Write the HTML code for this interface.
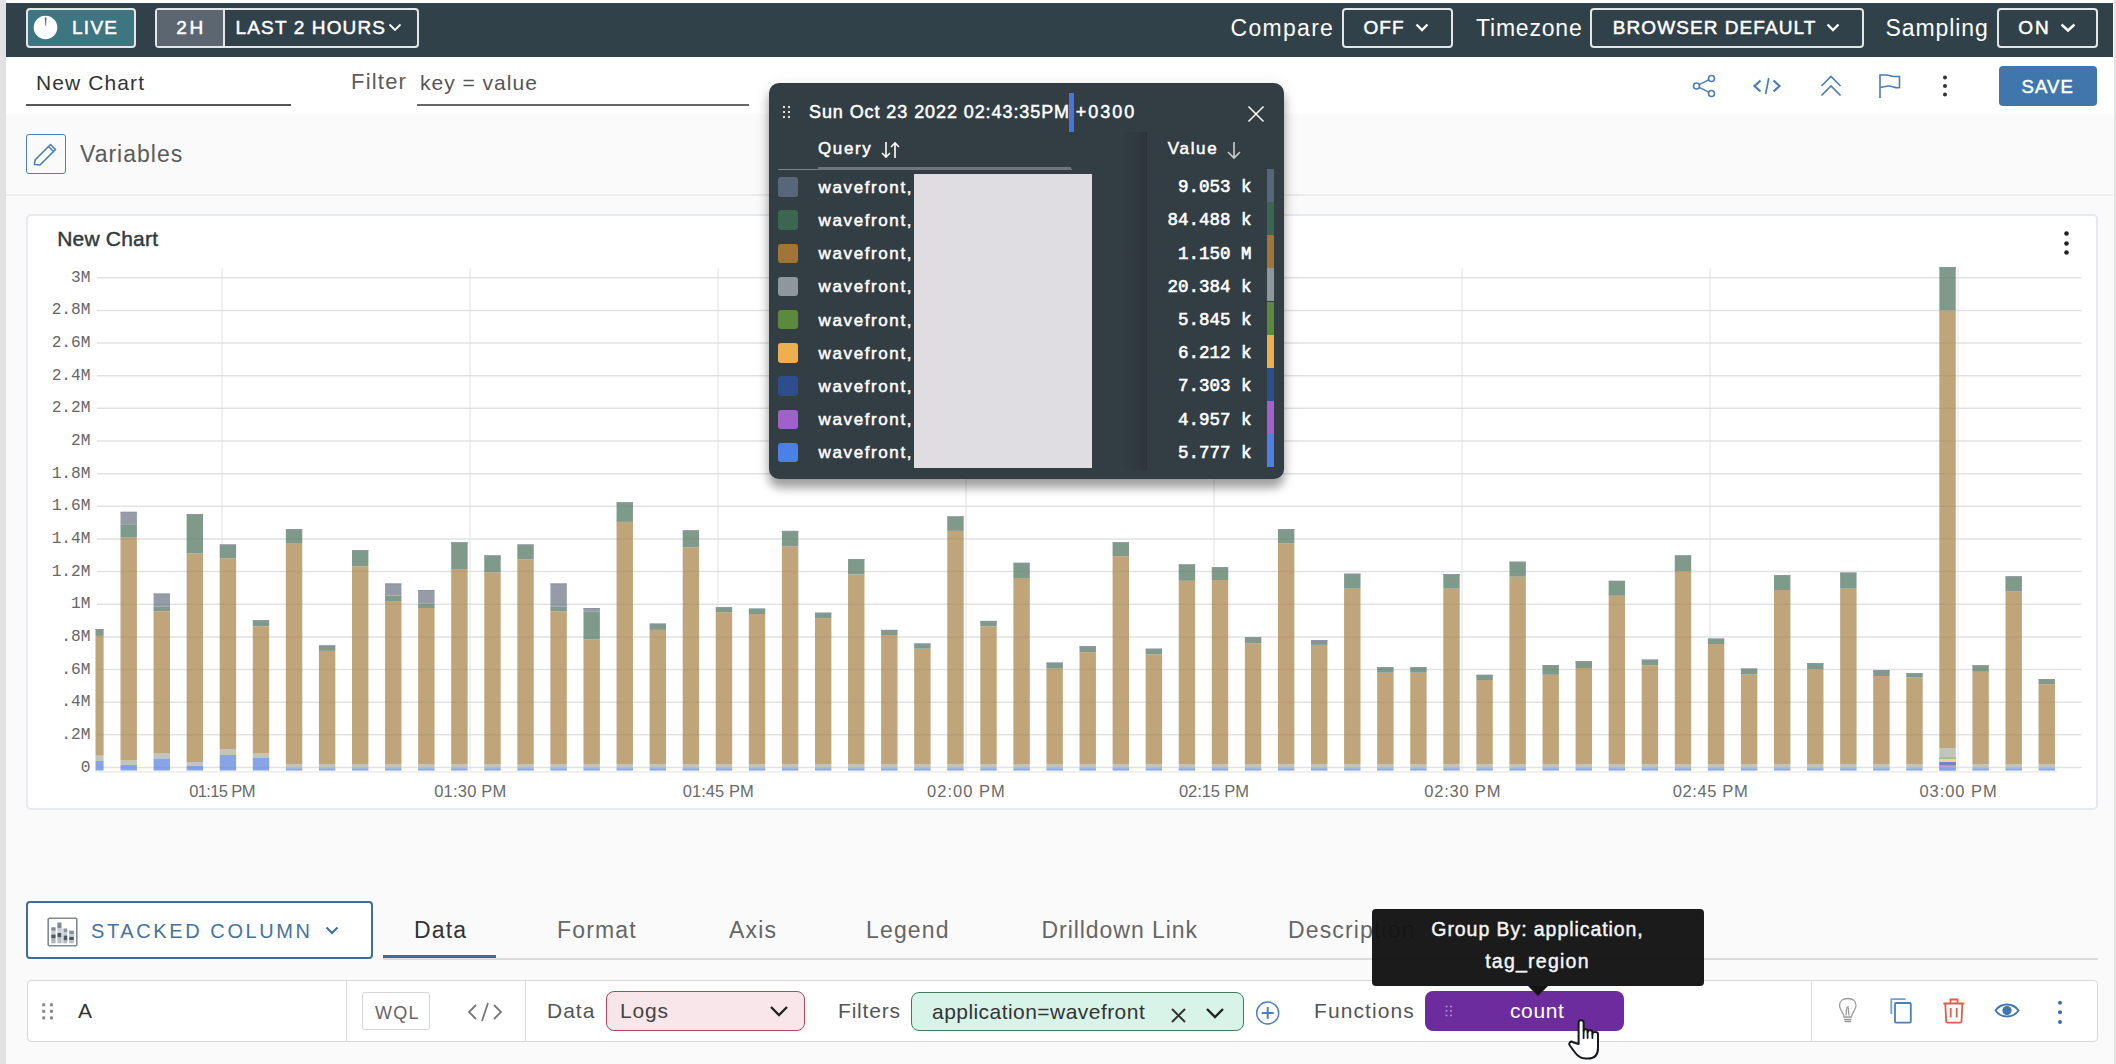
<!DOCTYPE html>
<html><head><meta charset="utf-8">
<style>
*{box-sizing:border-box;margin:0;padding:0}
html,body{width:2116px;height:1064px;overflow:hidden;background:#fafafa;font-family:"Liberation Sans",sans-serif}
.a{position:absolute;white-space:nowrap}
#lstrip{position:absolute;left:0;top:0;width:6px;height:1064px;background:#e2e2e2}
#rstrip{position:absolute;left:2114px;top:0;width:2px;height:1064px;background:#e2e2e2}
#topw{position:absolute;left:6px;top:0;width:2108px;height:3px;background:#fff}
#hdr{position:absolute;left:6px;top:3px;width:2107px;height:54.6px;background:#30414a}
#tb{position:absolute;left:6px;top:57px;width:2108px;height:56.5px;background:#fff}
.hb{position:absolute;border:2px solid #e4e6e8;border-radius:4px;height:40px;top:8px}
.ht{position:absolute;color:#fff;font-size:19px;font-weight:normal;-webkit-text-stroke:0.5px #fff;letter-spacing:0.3px;line-height:22px}
.hl{position:absolute;color:#fff;font-size:23px;line-height:28px;top:14px}
.chev{position:absolute}
.yl{position:absolute;left:29.5px;width:61px;text-align:right;font-family:"Liberation Mono",monospace;font-size:16.2px;line-height:20px;color:#666}
.xl{position:absolute;top:781px;font-size:16.5px;line-height:20px;color:#6a6a6a}
#tip{position:absolute;left:768.5px;top:83px;width:515.5px;height:395.5px;background:#333e44;border-radius:10px;box-shadow:0 9px 10px rgba(0,0,0,0.32),0 3px 16px rgba(0,0,0,0.12)}
.sw{position:absolute;left:778px;width:20px;height:19.5px;border-radius:3px}
.wf{position:absolute;left:817px;font-size:17px;line-height:24px;color:#fff;font-weight:normal;-webkit-text-stroke:0.5px #fff;letter-spacing:0.85px}
.val{position:absolute;left:1128px;width:123.5px;text-align:right;font-family:"Liberation Mono",monospace;font-size:17.5px;line-height:24px;color:#fff;font-weight:normal;-webkit-text-stroke:0.6px #fff;letter-spacing:0px}
.strip{position:absolute;left:1267px;width:7px;height:33.1px}
.tab{position:absolute;top:916px;font-size:23px;line-height:28px;color:#666;letter-spacing:1.15px}
.qi{position:absolute}
</style></head><body>
<div id="lstrip"></div><div id="rstrip"></div><div id="topw"></div>
<div id="hdr"></div>
<!-- LIVE -->
<div class="hb" style="left:26px;width:110px;background:#3d7680"></div>
<svg class="a" style="left:33px;top:15px" width="26" height="26" viewBox="0 0 26 26"><circle cx="12.5" cy="12.5" r="11.8" fill="#fff"/><path d="M11.7 2.4 L13.6 2.4 L12.9 11 L12.4 11 Z" fill="#3d7680"/></svg>
<div id="t_live" class="ht" style="left:72px;top:17px;letter-spacing:0.8px">LIVE</div>
<!-- 2H group -->
<div class="hb" style="left:155px;width:264px;background:#30414a"></div>
<div class="a" style="left:157px;top:10px;width:66px;height:36px;background:#5b6670"></div>
<div class="a" style="left:223px;top:10px;width:2px;height:36px;background:#e4e6e8"></div>
<div id="t_2h" class="ht" style="left:176px;top:17px;letter-spacing:1px">2H</div>
<div id="t_last" class="ht" style="left:236px;top:17px;letter-spacing:0.75px">LAST 2 HOURS</div>
<svg class="a" style="left:388px;top:21px" width="14" height="12" viewBox="0 0 14 12"><path d="M1.5 3.5 L7 9 L12.5 3.5" stroke="#fff" stroke-width="1.8" fill="none"/></svg>
<!-- right header -->
<div class="hl" style="left:1230.5px;letter-spacing:1.3px">Compare</div>
<div class="hb" style="left:1342px;width:111px"></div>
<div id="t_off" class="ht" style="left:1363px;top:17px">OFF</div>
<svg class="a" style="left:1414px;top:21px" width="16" height="12" viewBox="0 0 16 12"><path d="M2.5 3.5 L8 9 L13.5 3.5" stroke="#fff" stroke-width="2.4" fill="none"/></svg>
<div class="hl" style="left:1476px;letter-spacing:0.8px">Timezone</div>
<div class="hb" style="left:1590px;width:274px"></div>
<div id="t_bd" class="ht" style="left:1613px;top:17px;letter-spacing:0.8px">BROWSER DEFAULT</div>
<svg class="a" style="left:1825px;top:21px" width="16" height="12" viewBox="0 0 16 12"><path d="M2.5 3.5 L8 9 L13.5 3.5" stroke="#fff" stroke-width="2.4" fill="none"/></svg>
<div class="hl" style="left:1885.5px;letter-spacing:0.9px">Sampling</div>
<div class="hb" style="left:1997px;width:101px"></div>
<div id="t_on" class="ht" style="left:2018px;top:17px;letter-spacing:1.3px">ON</div>
<svg class="a" style="left:2060px;top:21px" width="16" height="12" viewBox="0 0 16 12"><path d="M1.5 3.5 L8 9.5 L14.5 3.5" stroke="#fff" stroke-width="2.4" fill="none"/></svg>

<!-- toolbar -->
<div id="tb"></div>
<div class="a" style="left:36px;top:70px;font-size:21px;line-height:26px;color:#333;letter-spacing:1.1px">New Chart</div>
<div class="a" style="left:26px;top:103.5px;width:265px;height:2px;background:#555"></div>
<div class="a" style="left:351px;top:69px;font-size:22px;line-height:26px;color:#5c5c5c;letter-spacing:1.2px">Filter</div>
<div class="a" style="left:420px;top:70px;font-size:21px;line-height:26px;color:#555;letter-spacing:1px">key = value</div>
<div class="a" style="left:417px;top:103.5px;width:332px;height:2px;background:#666"></div>
<!-- icons -->
<svg class="a" style="left:1690px;top:72px" width="28" height="28" viewBox="0 0 28 28" fill="none" stroke="#4a7cb6" stroke-width="1.6"><circle cx="21.5" cy="6.5" r="3"/><circle cx="21.5" cy="21.5" r="3"/><circle cx="6.5" cy="14" r="3"/><path d="M9.2 12.6 L18.8 7.9 M9.2 15.4 L18.8 20.1"/></svg>
<svg class="a" style="left:1751px;top:74px" width="32" height="24" viewBox="0 0 32 24" fill="none" stroke="#4a7cb6" stroke-width="2.2"><path d="M9.5 6.5 L3.5 12 L9.5 17.5 M22.5 6.5 L28.5 12 L22.5 17.5"/><path d="M17.8 4 L14.6 20" stroke-width="1.7"/></svg>
<svg class="a" style="left:1817px;top:72px" width="28" height="28" viewBox="0 0 28 28" fill="none" stroke="#4a7cb6" stroke-width="1.6"><path d="M4.5 14 L14 4.5 L23.5 14 M4.5 23.5 L14 14 L23.5 23.5"/></svg>
<svg class="a" style="left:1876px;top:72px" width="28" height="28" viewBox="0 0 28 28" fill="none" stroke="#4a7cb6" stroke-width="1.6"><path d="M4 26 L4 3 L10 3 C14 3 15 5 19 4.5 L23.5 4.5 L23.5 15.5 C19 16.5 17 14 13 14 C9 14 7 15.5 4 15.5"/></svg>
<svg class="a" style="left:1937px;top:72px" width="16" height="28" viewBox="0 0 16 28" fill="#333"><circle cx="8" cy="5.5" r="2"/><circle cx="8" cy="14" r="2"/><circle cx="8" cy="22.5" r="2"/></svg>
<div class="a" style="left:1999px;top:66px;width:98px;height:40px;background:#3f77ad;border-radius:4px"></div>
<div id="t_save" class="ht" style="left:2021.5px;top:75.5px;font-size:18.5px;letter-spacing:1.1px">SAVE</div>

<!-- variables -->
<div class="a" style="left:26px;top:133.5px;width:40px;height:40px;border:1.8px solid #4a7fc0;border-radius:3px;background:#fafafa"></div>
<svg class="a" style="left:30px;top:138px" width="32" height="32" viewBox="0 0 32 32" fill="none" stroke="#4a7fc0" stroke-width="1.6" stroke-linejoin="round"><path d="M4.5 26.5 L5 22 L20.5 6.5 L25.5 11.5 L10 27 Z M18.5 8.5 L23.5 13.5"/></svg>
<div class="a" style="left:80px;top:140px;font-size:23px;line-height:28px;color:#5a5a5a;letter-spacing:1px">Variables</div>
<div class="a" style="left:6px;top:194px;width:2107px;height:1.5px;background:#ececec"></div>

<!-- card -->
<div class="a" style="left:25.8px;top:213.6px;width:2072.2px;height:596.4px;background:#fff;border:2px solid #e7eaf0;border-radius:5px"></div>
<div id="t_card" class="a" style="left:57px;top:226px;font-size:21px;line-height:26px;color:#2f3a40;font-weight:normal;-webkit-text-stroke:0.45px #2f3a40;letter-spacing:-0.4px">New Chart</div>
<svg class="a" style="left:2058px;top:228px" width="16" height="30" viewBox="0 0 16 30" fill="#222"><circle cx="8.5" cy="5.5" r="2.3"/><circle cx="8.5" cy="15.5" r="2.3"/><circle cx="8.5" cy="24.5" r="2.3"/></svg>
<svg class="a" style="left:0;top:0" width="2116" height="1064">
<line x1="97" y1="767.50" x2="2081.5" y2="767.50" stroke="#ededed" stroke-width="1.5"/>
<line x1="97" y1="734.85" x2="2081.5" y2="734.85" stroke="#ededed" stroke-width="1.5"/>
<line x1="97" y1="702.20" x2="2081.5" y2="702.20" stroke="#ededed" stroke-width="1.5"/>
<line x1="97" y1="669.55" x2="2081.5" y2="669.55" stroke="#ededed" stroke-width="1.5"/>
<line x1="97" y1="636.90" x2="2081.5" y2="636.90" stroke="#ededed" stroke-width="1.5"/>
<line x1="97" y1="604.25" x2="2081.5" y2="604.25" stroke="#ededed" stroke-width="1.5"/>
<line x1="97" y1="571.60" x2="2081.5" y2="571.60" stroke="#ededed" stroke-width="1.5"/>
<line x1="97" y1="538.95" x2="2081.5" y2="538.95" stroke="#ededed" stroke-width="1.5"/>
<line x1="97" y1="506.30" x2="2081.5" y2="506.30" stroke="#ededed" stroke-width="1.5"/>
<line x1="97" y1="473.65" x2="2081.5" y2="473.65" stroke="#ededed" stroke-width="1.5"/>
<line x1="97" y1="441.00" x2="2081.5" y2="441.00" stroke="#ededed" stroke-width="1.5"/>
<line x1="97" y1="408.35" x2="2081.5" y2="408.35" stroke="#ededed" stroke-width="1.5"/>
<line x1="97" y1="375.70" x2="2081.5" y2="375.70" stroke="#ededed" stroke-width="1.5"/>
<line x1="97" y1="343.05" x2="2081.5" y2="343.05" stroke="#ededed" stroke-width="1.5"/>
<line x1="97" y1="310.40" x2="2081.5" y2="310.40" stroke="#ededed" stroke-width="1.5"/>
<line x1="97" y1="277.75" x2="2081.5" y2="277.75" stroke="#ededed" stroke-width="1.5"/>
<line x1="222" y1="268" x2="222" y2="772" stroke="#ededed" stroke-width="1.5"/>
<line x1="470" y1="268" x2="470" y2="772" stroke="#ededed" stroke-width="1.5"/>
<line x1="718" y1="268" x2="718" y2="772" stroke="#ededed" stroke-width="1.5"/>
<line x1="966" y1="268" x2="966" y2="772" stroke="#ededed" stroke-width="1.5"/>
<line x1="1214" y1="268" x2="1214" y2="772" stroke="#ededed" stroke-width="1.5"/>
<line x1="1462" y1="268" x2="1462" y2="772" stroke="#ededed" stroke-width="1.5"/>
<line x1="1710" y1="268" x2="1710" y2="772" stroke="#ededed" stroke-width="1.5"/>
<line x1="1958" y1="268" x2="1958" y2="772" stroke="#ededed" stroke-width="1.5"/>
<line x1="95" y1="771.8" x2="2058" y2="771.8" stroke="#ececec" stroke-width="1.5"/>
<rect x="95.50" y="635.90" width="8.1" height="119.90" fill="#c0a57a"/>
<rect x="95.50" y="629.00" width="8.1" height="6.90" fill="#7f9a8b"/>
<rect x="95.50" y="629.00" width="8.1" height="1" fill="#8e95a3"/>
<rect x="95.50" y="755.80" width="8.1" height="5.20" fill="#c3c5bb"/>
<rect x="95.50" y="761.00" width="8.1" height="9.50" fill="#86a4e6"/>
<rect x="120.50" y="537.70" width="16.4" height="222.30" fill="#c0a57a"/>
<rect x="120.50" y="511.80" width="16.4" height="13.10" fill="#959ba7"/>
<rect x="120.50" y="524.90" width="16.4" height="12.80" fill="#7f9a8b"/>
<rect x="120.50" y="511.80" width="16.4" height="1" fill="#8e95a3"/>
<rect x="120.50" y="760.00" width="16.4" height="5.00" fill="#c3c5bb"/>
<rect x="120.50" y="765.00" width="16.4" height="5.50" fill="#86a4e6"/>
<rect x="153.57" y="611.30" width="16.4" height="141.70" fill="#c0a57a"/>
<rect x="153.57" y="593.60" width="16.4" height="13.10" fill="#959ba7"/>
<rect x="153.57" y="606.70" width="16.4" height="4.60" fill="#7f9a8b"/>
<rect x="153.57" y="593.60" width="16.4" height="1" fill="#8e95a3"/>
<rect x="153.57" y="753.00" width="16.4" height="5.50" fill="#c3c5bb"/>
<rect x="153.57" y="758.50" width="16.4" height="12.00" fill="#86a4e6"/>
<rect x="186.64" y="553.50" width="16.4" height="208.50" fill="#c0a57a"/>
<rect x="186.64" y="514.00" width="16.4" height="39.50" fill="#7f9a8b"/>
<rect x="186.64" y="514.00" width="16.4" height="1" fill="#8e95a3"/>
<rect x="186.64" y="762.00" width="16.4" height="4.00" fill="#c3c5bb"/>
<rect x="186.64" y="766.00" width="16.4" height="4.50" fill="#86a4e6"/>
<rect x="219.71" y="558.20" width="16.4" height="190.80" fill="#c0a57a"/>
<rect x="219.71" y="544.50" width="16.4" height="13.70" fill="#7f9a8b"/>
<rect x="219.71" y="544.50" width="16.4" height="1" fill="#8e95a3"/>
<rect x="219.71" y="749.00" width="16.4" height="6.00" fill="#c3c5bb"/>
<rect x="219.71" y="755.00" width="16.4" height="15.50" fill="#86a4e6"/>
<rect x="252.78" y="626.30" width="16.4" height="126.70" fill="#c0a57a"/>
<rect x="252.78" y="620.30" width="16.4" height="6.00" fill="#7f9a8b"/>
<rect x="252.78" y="620.30" width="16.4" height="1" fill="#8e95a3"/>
<rect x="252.78" y="753.00" width="16.4" height="5.00" fill="#c3c5bb"/>
<rect x="252.78" y="758.00" width="16.4" height="12.50" fill="#86a4e6"/>
<rect x="285.85" y="543.70" width="16.4" height="220.30" fill="#c0a57a"/>
<rect x="285.85" y="529.00" width="16.4" height="14.70" fill="#7f9a8b"/>
<rect x="285.85" y="529.00" width="16.4" height="1" fill="#8e95a3"/>
<rect x="285.85" y="764.00" width="16.4" height="4.30" fill="#c3c5bb"/>
<rect x="285.85" y="768.30" width="16.4" height="2.20" fill="#86a4e6"/>
<rect x="318.92" y="650.90" width="16.4" height="113.10" fill="#c0a57a"/>
<rect x="318.92" y="645.40" width="16.4" height="5.50" fill="#7f9a8b"/>
<rect x="318.92" y="645.40" width="16.4" height="1" fill="#8e95a3"/>
<rect x="318.92" y="764.00" width="16.4" height="4.30" fill="#c3c5bb"/>
<rect x="318.92" y="768.30" width="16.4" height="2.20" fill="#86a4e6"/>
<rect x="351.99" y="566.30" width="16.4" height="197.70" fill="#c0a57a"/>
<rect x="351.99" y="550.00" width="16.4" height="16.30" fill="#7f9a8b"/>
<rect x="351.99" y="550.00" width="16.4" height="1" fill="#8e95a3"/>
<rect x="351.99" y="764.00" width="16.4" height="4.30" fill="#c3c5bb"/>
<rect x="351.99" y="768.30" width="16.4" height="2.20" fill="#86a4e6"/>
<rect x="385.06" y="601.00" width="16.4" height="163.00" fill="#c0a57a"/>
<rect x="385.06" y="583.50" width="16.4" height="12.00" fill="#959ba7"/>
<rect x="385.06" y="595.50" width="16.4" height="5.50" fill="#7f9a8b"/>
<rect x="385.06" y="583.50" width="16.4" height="1" fill="#8e95a3"/>
<rect x="385.06" y="764.00" width="16.4" height="4.30" fill="#c3c5bb"/>
<rect x="385.06" y="768.30" width="16.4" height="2.20" fill="#86a4e6"/>
<rect x="418.13" y="608.00" width="16.4" height="156.00" fill="#c0a57a"/>
<rect x="418.13" y="590.00" width="16.4" height="13.70" fill="#959ba7"/>
<rect x="418.13" y="603.70" width="16.4" height="4.30" fill="#7f9a8b"/>
<rect x="418.13" y="590.00" width="16.4" height="1" fill="#8e95a3"/>
<rect x="418.13" y="764.00" width="16.4" height="4.30" fill="#c3c5bb"/>
<rect x="418.13" y="768.30" width="16.4" height="2.20" fill="#86a4e6"/>
<rect x="451.20" y="569.00" width="16.4" height="195.00" fill="#c0a57a"/>
<rect x="451.20" y="542.30" width="16.4" height="26.70" fill="#7f9a8b"/>
<rect x="451.20" y="542.30" width="16.4" height="1" fill="#8e95a3"/>
<rect x="451.20" y="764.00" width="16.4" height="4.30" fill="#c3c5bb"/>
<rect x="451.20" y="768.30" width="16.4" height="2.20" fill="#86a4e6"/>
<rect x="484.27" y="572.30" width="16.4" height="191.70" fill="#c0a57a"/>
<rect x="484.27" y="555.40" width="16.4" height="16.90" fill="#7f9a8b"/>
<rect x="484.27" y="555.40" width="16.4" height="1" fill="#8e95a3"/>
<rect x="484.27" y="764.00" width="16.4" height="4.30" fill="#c3c5bb"/>
<rect x="484.27" y="768.30" width="16.4" height="2.20" fill="#86a4e6"/>
<rect x="517.34" y="559.50" width="16.4" height="204.50" fill="#c0a57a"/>
<rect x="517.34" y="544.50" width="16.4" height="15.00" fill="#7f9a8b"/>
<rect x="517.34" y="544.50" width="16.4" height="1" fill="#8e95a3"/>
<rect x="517.34" y="764.00" width="16.4" height="4.30" fill="#c3c5bb"/>
<rect x="517.34" y="768.30" width="16.4" height="2.20" fill="#86a4e6"/>
<rect x="550.41" y="611.30" width="16.4" height="152.70" fill="#c0a57a"/>
<rect x="550.41" y="583.50" width="16.4" height="22.90" fill="#959ba7"/>
<rect x="550.41" y="606.40" width="16.4" height="4.90" fill="#7f9a8b"/>
<rect x="550.41" y="583.50" width="16.4" height="1" fill="#8e95a3"/>
<rect x="550.41" y="764.00" width="16.4" height="4.30" fill="#c3c5bb"/>
<rect x="550.41" y="768.30" width="16.4" height="2.20" fill="#86a4e6"/>
<rect x="583.48" y="639.40" width="16.4" height="124.60" fill="#c0a57a"/>
<rect x="583.48" y="608.00" width="16.4" height="3.30" fill="#959ba7"/>
<rect x="583.48" y="611.30" width="16.4" height="28.10" fill="#7f9a8b"/>
<rect x="583.48" y="608.00" width="16.4" height="1" fill="#8e95a3"/>
<rect x="583.48" y="764.00" width="16.4" height="4.30" fill="#c3c5bb"/>
<rect x="583.48" y="768.30" width="16.4" height="2.20" fill="#86a4e6"/>
<rect x="616.55" y="521.90" width="16.4" height="242.10" fill="#c0a57a"/>
<rect x="616.55" y="502.30" width="16.4" height="19.60" fill="#7f9a8b"/>
<rect x="616.55" y="502.30" width="16.4" height="1" fill="#8e95a3"/>
<rect x="616.55" y="764.00" width="16.4" height="4.30" fill="#c3c5bb"/>
<rect x="616.55" y="768.30" width="16.4" height="2.20" fill="#86a4e6"/>
<rect x="649.62" y="629.90" width="16.4" height="134.10" fill="#c0a57a"/>
<rect x="649.62" y="623.60" width="16.4" height="6.30" fill="#7f9a8b"/>
<rect x="649.62" y="623.60" width="16.4" height="1" fill="#8e95a3"/>
<rect x="649.62" y="764.00" width="16.4" height="4.30" fill="#c3c5bb"/>
<rect x="649.62" y="768.30" width="16.4" height="2.20" fill="#86a4e6"/>
<rect x="682.69" y="547.30" width="16.4" height="216.70" fill="#c0a57a"/>
<rect x="682.69" y="530.30" width="16.4" height="17.00" fill="#7f9a8b"/>
<rect x="682.69" y="530.30" width="16.4" height="1" fill="#8e95a3"/>
<rect x="682.69" y="764.00" width="16.4" height="4.30" fill="#c3c5bb"/>
<rect x="682.69" y="768.30" width="16.4" height="2.20" fill="#86a4e6"/>
<rect x="715.76" y="612.10" width="16.4" height="151.90" fill="#c0a57a"/>
<rect x="715.76" y="607.20" width="16.4" height="4.90" fill="#7f9a8b"/>
<rect x="715.76" y="607.20" width="16.4" height="1" fill="#8e95a3"/>
<rect x="715.76" y="764.00" width="16.4" height="4.30" fill="#c3c5bb"/>
<rect x="715.76" y="768.30" width="16.4" height="2.20" fill="#86a4e6"/>
<rect x="748.83" y="614.00" width="16.4" height="150.00" fill="#c0a57a"/>
<rect x="748.83" y="608.60" width="16.4" height="5.40" fill="#7f9a8b"/>
<rect x="748.83" y="608.60" width="16.4" height="1" fill="#8e95a3"/>
<rect x="748.83" y="764.00" width="16.4" height="4.30" fill="#c3c5bb"/>
<rect x="748.83" y="768.30" width="16.4" height="2.20" fill="#86a4e6"/>
<rect x="781.90" y="546.40" width="16.4" height="217.60" fill="#c0a57a"/>
<rect x="781.90" y="530.90" width="16.4" height="15.50" fill="#7f9a8b"/>
<rect x="781.90" y="530.90" width="16.4" height="1" fill="#8e95a3"/>
<rect x="781.90" y="764.00" width="16.4" height="4.30" fill="#c3c5bb"/>
<rect x="781.90" y="768.30" width="16.4" height="2.20" fill="#86a4e6"/>
<rect x="814.97" y="618.10" width="16.4" height="145.90" fill="#c0a57a"/>
<rect x="814.97" y="612.70" width="16.4" height="5.40" fill="#7f9a8b"/>
<rect x="814.97" y="612.70" width="16.4" height="1" fill="#8e95a3"/>
<rect x="814.97" y="764.00" width="16.4" height="4.30" fill="#c3c5bb"/>
<rect x="814.97" y="768.30" width="16.4" height="2.20" fill="#86a4e6"/>
<rect x="848.04" y="574.50" width="16.4" height="189.50" fill="#c0a57a"/>
<rect x="848.04" y="559.00" width="16.4" height="15.50" fill="#7f9a8b"/>
<rect x="848.04" y="559.00" width="16.4" height="1" fill="#8e95a3"/>
<rect x="848.04" y="764.00" width="16.4" height="4.30" fill="#c3c5bb"/>
<rect x="848.04" y="768.30" width="16.4" height="2.20" fill="#86a4e6"/>
<rect x="881.11" y="635.00" width="16.4" height="129.00" fill="#c0a57a"/>
<rect x="881.11" y="629.90" width="16.4" height="5.10" fill="#7f9a8b"/>
<rect x="881.11" y="629.90" width="16.4" height="1" fill="#8e95a3"/>
<rect x="881.11" y="764.00" width="16.4" height="4.30" fill="#c3c5bb"/>
<rect x="881.11" y="768.30" width="16.4" height="2.20" fill="#86a4e6"/>
<rect x="914.18" y="648.70" width="16.4" height="115.30" fill="#c0a57a"/>
<rect x="914.18" y="643.50" width="16.4" height="5.20" fill="#7f9a8b"/>
<rect x="914.18" y="643.50" width="16.4" height="1" fill="#8e95a3"/>
<rect x="914.18" y="764.00" width="16.4" height="4.30" fill="#c3c5bb"/>
<rect x="914.18" y="768.30" width="16.4" height="2.20" fill="#86a4e6"/>
<rect x="947.25" y="530.90" width="16.4" height="233.10" fill="#c0a57a"/>
<rect x="947.25" y="516.40" width="16.4" height="14.50" fill="#7f9a8b"/>
<rect x="947.25" y="516.40" width="16.4" height="1" fill="#8e95a3"/>
<rect x="947.25" y="764.00" width="16.4" height="4.30" fill="#c3c5bb"/>
<rect x="947.25" y="768.30" width="16.4" height="2.20" fill="#86a4e6"/>
<rect x="980.32" y="626.30" width="16.4" height="137.70" fill="#c0a57a"/>
<rect x="980.32" y="620.90" width="16.4" height="5.40" fill="#7f9a8b"/>
<rect x="980.32" y="620.90" width="16.4" height="1" fill="#8e95a3"/>
<rect x="980.32" y="764.00" width="16.4" height="4.30" fill="#c3c5bb"/>
<rect x="980.32" y="768.30" width="16.4" height="2.20" fill="#86a4e6"/>
<rect x="1013.39" y="578.00" width="16.4" height="186.00" fill="#c0a57a"/>
<rect x="1013.39" y="562.80" width="16.4" height="15.20" fill="#7f9a8b"/>
<rect x="1013.39" y="562.80" width="16.4" height="1" fill="#8e95a3"/>
<rect x="1013.39" y="764.00" width="16.4" height="4.30" fill="#c3c5bb"/>
<rect x="1013.39" y="768.30" width="16.4" height="2.20" fill="#86a4e6"/>
<rect x="1046.46" y="668.60" width="16.4" height="95.40" fill="#c0a57a"/>
<rect x="1046.46" y="662.60" width="16.4" height="6.00" fill="#7f9a8b"/>
<rect x="1046.46" y="662.60" width="16.4" height="1" fill="#8e95a3"/>
<rect x="1046.46" y="764.00" width="16.4" height="4.30" fill="#c3c5bb"/>
<rect x="1046.46" y="768.30" width="16.4" height="2.20" fill="#86a4e6"/>
<rect x="1079.53" y="652.20" width="16.4" height="111.80" fill="#c0a57a"/>
<rect x="1079.53" y="646.20" width="16.4" height="6.00" fill="#7f9a8b"/>
<rect x="1079.53" y="646.20" width="16.4" height="1" fill="#8e95a3"/>
<rect x="1079.53" y="764.00" width="16.4" height="4.30" fill="#c3c5bb"/>
<rect x="1079.53" y="768.30" width="16.4" height="2.20" fill="#86a4e6"/>
<rect x="1112.60" y="556.20" width="16.4" height="207.80" fill="#c0a57a"/>
<rect x="1112.60" y="542.30" width="16.4" height="13.90" fill="#7f9a8b"/>
<rect x="1112.60" y="542.30" width="16.4" height="1" fill="#8e95a3"/>
<rect x="1112.60" y="764.00" width="16.4" height="4.30" fill="#c3c5bb"/>
<rect x="1112.60" y="768.30" width="16.4" height="2.20" fill="#86a4e6"/>
<rect x="1145.67" y="654.40" width="16.4" height="109.60" fill="#c0a57a"/>
<rect x="1145.67" y="648.70" width="16.4" height="5.70" fill="#7f9a8b"/>
<rect x="1145.67" y="648.70" width="16.4" height="1" fill="#8e95a3"/>
<rect x="1145.67" y="764.00" width="16.4" height="4.30" fill="#c3c5bb"/>
<rect x="1145.67" y="768.30" width="16.4" height="2.20" fill="#86a4e6"/>
<rect x="1178.74" y="580.80" width="16.4" height="183.20" fill="#c0a57a"/>
<rect x="1178.74" y="564.40" width="16.4" height="16.40" fill="#7f9a8b"/>
<rect x="1178.74" y="564.40" width="16.4" height="1" fill="#8e95a3"/>
<rect x="1178.74" y="764.00" width="16.4" height="4.30" fill="#c3c5bb"/>
<rect x="1178.74" y="768.30" width="16.4" height="2.20" fill="#86a4e6"/>
<rect x="1211.81" y="580.00" width="16.4" height="184.00" fill="#c0a57a"/>
<rect x="1211.81" y="567.20" width="16.4" height="12.80" fill="#7f9a8b"/>
<rect x="1211.81" y="567.20" width="16.4" height="1" fill="#8e95a3"/>
<rect x="1211.81" y="764.00" width="16.4" height="4.30" fill="#c3c5bb"/>
<rect x="1211.81" y="768.30" width="16.4" height="2.20" fill="#86a4e6"/>
<rect x="1244.88" y="643.20" width="16.4" height="120.80" fill="#c0a57a"/>
<rect x="1244.88" y="637.20" width="16.4" height="6.00" fill="#7f9a8b"/>
<rect x="1244.88" y="637.20" width="16.4" height="1" fill="#8e95a3"/>
<rect x="1244.88" y="764.00" width="16.4" height="4.30" fill="#c3c5bb"/>
<rect x="1244.88" y="768.30" width="16.4" height="2.20" fill="#86a4e6"/>
<rect x="1277.95" y="543.20" width="16.4" height="220.80" fill="#c0a57a"/>
<rect x="1277.95" y="529.00" width="16.4" height="14.20" fill="#7f9a8b"/>
<rect x="1277.95" y="529.00" width="16.4" height="1" fill="#8e95a3"/>
<rect x="1277.95" y="764.00" width="16.4" height="4.30" fill="#c3c5bb"/>
<rect x="1277.95" y="768.30" width="16.4" height="2.20" fill="#86a4e6"/>
<rect x="1311.02" y="644.90" width="16.4" height="119.10" fill="#c0a57a"/>
<rect x="1311.02" y="640.00" width="16.4" height="4.90" fill="#7f9a8b"/>
<rect x="1311.02" y="640.00" width="16.4" height="1" fill="#8e95a3"/>
<rect x="1311.02" y="764.00" width="16.4" height="4.30" fill="#c3c5bb"/>
<rect x="1311.02" y="768.30" width="16.4" height="2.20" fill="#86a4e6"/>
<rect x="1344.09" y="588.70" width="16.4" height="175.30" fill="#c0a57a"/>
<rect x="1344.09" y="573.70" width="16.4" height="15.00" fill="#7f9a8b"/>
<rect x="1344.09" y="573.70" width="16.4" height="1" fill="#8e95a3"/>
<rect x="1344.09" y="764.00" width="16.4" height="4.30" fill="#c3c5bb"/>
<rect x="1344.09" y="768.30" width="16.4" height="2.20" fill="#86a4e6"/>
<rect x="1377.16" y="672.70" width="16.4" height="91.30" fill="#c0a57a"/>
<rect x="1377.16" y="667.20" width="16.4" height="5.50" fill="#7f9a8b"/>
<rect x="1377.16" y="667.20" width="16.4" height="1" fill="#8e95a3"/>
<rect x="1377.16" y="764.00" width="16.4" height="4.30" fill="#c3c5bb"/>
<rect x="1377.16" y="768.30" width="16.4" height="2.20" fill="#86a4e6"/>
<rect x="1410.23" y="672.70" width="16.4" height="91.30" fill="#c0a57a"/>
<rect x="1410.23" y="667.20" width="16.4" height="5.50" fill="#7f9a8b"/>
<rect x="1410.23" y="667.20" width="16.4" height="1" fill="#8e95a3"/>
<rect x="1410.23" y="764.00" width="16.4" height="4.30" fill="#c3c5bb"/>
<rect x="1410.23" y="768.30" width="16.4" height="2.20" fill="#86a4e6"/>
<rect x="1443.30" y="588.70" width="16.4" height="175.30" fill="#c0a57a"/>
<rect x="1443.30" y="574.00" width="16.4" height="14.70" fill="#7f9a8b"/>
<rect x="1443.30" y="574.00" width="16.4" height="1" fill="#8e95a3"/>
<rect x="1443.30" y="764.00" width="16.4" height="4.30" fill="#c3c5bb"/>
<rect x="1443.30" y="768.30" width="16.4" height="2.20" fill="#86a4e6"/>
<rect x="1476.37" y="680.00" width="16.4" height="84.00" fill="#c0a57a"/>
<rect x="1476.37" y="674.80" width="16.4" height="5.20" fill="#7f9a8b"/>
<rect x="1476.37" y="674.80" width="16.4" height="1" fill="#8e95a3"/>
<rect x="1476.37" y="764.00" width="16.4" height="4.30" fill="#c3c5bb"/>
<rect x="1476.37" y="768.30" width="16.4" height="2.20" fill="#86a4e6"/>
<rect x="1509.44" y="576.70" width="16.4" height="187.30" fill="#c0a57a"/>
<rect x="1509.44" y="561.70" width="16.4" height="15.00" fill="#7f9a8b"/>
<rect x="1509.44" y="561.70" width="16.4" height="1" fill="#8e95a3"/>
<rect x="1509.44" y="764.00" width="16.4" height="4.30" fill="#c3c5bb"/>
<rect x="1509.44" y="768.30" width="16.4" height="2.20" fill="#86a4e6"/>
<rect x="1542.51" y="674.80" width="16.4" height="89.20" fill="#c0a57a"/>
<rect x="1542.51" y="665.00" width="16.4" height="9.80" fill="#7f9a8b"/>
<rect x="1542.51" y="665.00" width="16.4" height="1" fill="#8e95a3"/>
<rect x="1542.51" y="764.00" width="16.4" height="4.30" fill="#c3c5bb"/>
<rect x="1542.51" y="768.30" width="16.4" height="2.20" fill="#86a4e6"/>
<rect x="1575.58" y="668.00" width="16.4" height="96.00" fill="#c0a57a"/>
<rect x="1575.58" y="661.20" width="16.4" height="6.80" fill="#7f9a8b"/>
<rect x="1575.58" y="661.20" width="16.4" height="1" fill="#8e95a3"/>
<rect x="1575.58" y="764.00" width="16.4" height="4.30" fill="#c3c5bb"/>
<rect x="1575.58" y="768.30" width="16.4" height="2.20" fill="#86a4e6"/>
<rect x="1608.65" y="595.80" width="16.4" height="168.20" fill="#c0a57a"/>
<rect x="1608.65" y="580.80" width="16.4" height="15.00" fill="#7f9a8b"/>
<rect x="1608.65" y="580.80" width="16.4" height="1" fill="#8e95a3"/>
<rect x="1608.65" y="764.00" width="16.4" height="4.30" fill="#c3c5bb"/>
<rect x="1608.65" y="768.30" width="16.4" height="2.20" fill="#86a4e6"/>
<rect x="1641.72" y="665.30" width="16.4" height="98.70" fill="#c0a57a"/>
<rect x="1641.72" y="659.60" width="16.4" height="5.70" fill="#7f9a8b"/>
<rect x="1641.72" y="659.60" width="16.4" height="1" fill="#8e95a3"/>
<rect x="1641.72" y="764.00" width="16.4" height="4.30" fill="#c3c5bb"/>
<rect x="1641.72" y="768.30" width="16.4" height="2.20" fill="#86a4e6"/>
<rect x="1674.79" y="571.00" width="16.4" height="193.00" fill="#c0a57a"/>
<rect x="1674.79" y="555.40" width="16.4" height="15.60" fill="#7f9a8b"/>
<rect x="1674.79" y="555.40" width="16.4" height="1" fill="#8e95a3"/>
<rect x="1674.79" y="764.00" width="16.4" height="4.30" fill="#c3c5bb"/>
<rect x="1674.79" y="768.30" width="16.4" height="2.20" fill="#86a4e6"/>
<rect x="1707.86" y="644.00" width="16.4" height="120.00" fill="#c0a57a"/>
<rect x="1707.86" y="638.60" width="16.4" height="5.40" fill="#7f9a8b"/>
<rect x="1707.86" y="638.60" width="16.4" height="1" fill="#8e95a3"/>
<rect x="1707.86" y="764.00" width="16.4" height="4.30" fill="#c3c5bb"/>
<rect x="1707.86" y="768.30" width="16.4" height="2.20" fill="#86a4e6"/>
<rect x="1740.93" y="674.60" width="16.4" height="89.40" fill="#c0a57a"/>
<rect x="1740.93" y="668.60" width="16.4" height="6.00" fill="#7f9a8b"/>
<rect x="1740.93" y="668.60" width="16.4" height="1" fill="#8e95a3"/>
<rect x="1740.93" y="764.00" width="16.4" height="4.30" fill="#c3c5bb"/>
<rect x="1740.93" y="768.30" width="16.4" height="2.20" fill="#86a4e6"/>
<rect x="1774.00" y="590.00" width="16.4" height="174.00" fill="#c0a57a"/>
<rect x="1774.00" y="575.00" width="16.4" height="15.00" fill="#7f9a8b"/>
<rect x="1774.00" y="575.00" width="16.4" height="1" fill="#8e95a3"/>
<rect x="1774.00" y="764.00" width="16.4" height="4.30" fill="#c3c5bb"/>
<rect x="1774.00" y="768.30" width="16.4" height="2.20" fill="#86a4e6"/>
<rect x="1807.07" y="669.10" width="16.4" height="94.90" fill="#c0a57a"/>
<rect x="1807.07" y="663.10" width="16.4" height="6.00" fill="#7f9a8b"/>
<rect x="1807.07" y="663.10" width="16.4" height="1" fill="#8e95a3"/>
<rect x="1807.07" y="764.00" width="16.4" height="4.30" fill="#c3c5bb"/>
<rect x="1807.07" y="768.30" width="16.4" height="2.20" fill="#86a4e6"/>
<rect x="1840.14" y="588.70" width="16.4" height="175.30" fill="#c0a57a"/>
<rect x="1840.14" y="572.60" width="16.4" height="16.10" fill="#7f9a8b"/>
<rect x="1840.14" y="572.60" width="16.4" height="1" fill="#8e95a3"/>
<rect x="1840.14" y="764.00" width="16.4" height="4.30" fill="#c3c5bb"/>
<rect x="1840.14" y="768.30" width="16.4" height="2.20" fill="#86a4e6"/>
<rect x="1873.21" y="676.00" width="16.4" height="88.00" fill="#c0a57a"/>
<rect x="1873.21" y="670.00" width="16.4" height="6.00" fill="#7f9a8b"/>
<rect x="1873.21" y="670.00" width="16.4" height="1" fill="#8e95a3"/>
<rect x="1873.21" y="764.00" width="16.4" height="4.30" fill="#c3c5bb"/>
<rect x="1873.21" y="768.30" width="16.4" height="2.20" fill="#86a4e6"/>
<rect x="1906.28" y="677.60" width="16.4" height="86.40" fill="#c0a57a"/>
<rect x="1906.28" y="673.20" width="16.4" height="4.40" fill="#7f9a8b"/>
<rect x="1906.28" y="673.20" width="16.4" height="1" fill="#8e95a3"/>
<rect x="1906.28" y="764.00" width="16.4" height="4.30" fill="#c3c5bb"/>
<rect x="1906.28" y="768.30" width="16.4" height="2.20" fill="#86a4e6"/>
<rect x="1939.35" y="310.50" width="16.4" height="437.50" fill="#c0a57a"/>
<rect x="1939.35" y="267.10" width="16.4" height="43.40" fill="#7f9a8b"/>
<rect x="1939.35" y="267.10" width="16.4" height="1" fill="#8e95a3"/>
<rect x="1939.35" y="748.00" width="16.4" height="9.40" fill="#c3c5bb"/>
<rect x="1939.35" y="757.40" width="16.4" height="13.10" fill="#86a4e6"/>
<rect x="1972.42" y="671.80" width="16.4" height="92.20" fill="#c0a57a"/>
<rect x="1972.42" y="665.30" width="16.4" height="6.50" fill="#7f9a8b"/>
<rect x="1972.42" y="665.30" width="16.4" height="1" fill="#8e95a3"/>
<rect x="1972.42" y="764.00" width="16.4" height="4.30" fill="#c3c5bb"/>
<rect x="1972.42" y="768.30" width="16.4" height="2.20" fill="#86a4e6"/>
<rect x="2005.49" y="591.60" width="16.4" height="172.40" fill="#c0a57a"/>
<rect x="2005.49" y="576.30" width="16.4" height="15.30" fill="#7f9a8b"/>
<rect x="2005.49" y="576.30" width="16.4" height="1" fill="#8e95a3"/>
<rect x="2005.49" y="764.00" width="16.4" height="4.30" fill="#c3c5bb"/>
<rect x="2005.49" y="768.30" width="16.4" height="2.20" fill="#86a4e6"/>
<rect x="2038.56" y="684.20" width="16.4" height="79.80" fill="#c0a57a"/>
<rect x="2038.56" y="679.00" width="16.4" height="5.20" fill="#7f9a8b"/>
<rect x="2038.56" y="679.00" width="16.4" height="1" fill="#8e95a3"/>
<rect x="2038.56" y="764.00" width="16.4" height="4.30" fill="#c3c5bb"/>
<rect x="2038.56" y="768.30" width="16.4" height="2.20" fill="#86a4e6"/>
<rect x="1939.35" y="757.4" width="16.4" height="1.6" fill="#9fbf8a"/>
<rect x="1939.35" y="759" width="16.4" height="3" fill="#f2d49a"/>
<rect x="1939.35" y="762" width="16.4" height="3.5" fill="#6d86c0"/>
<rect x="1939.35" y="765.5" width="16.4" height="2.5" fill="#b9a0df"/>
<rect x="1939.35" y="768" width="16.4" height="2.5" fill="#86a4e6"/>
<line x1="97" y1="767.50" x2="2081.5" y2="767.50" stroke="rgba(0,0,0,0.045)" stroke-width="1.5"/>
<line x1="97" y1="734.85" x2="2081.5" y2="734.85" stroke="rgba(0,0,0,0.045)" stroke-width="1.5"/>
<line x1="97" y1="702.20" x2="2081.5" y2="702.20" stroke="rgba(0,0,0,0.045)" stroke-width="1.5"/>
<line x1="97" y1="669.55" x2="2081.5" y2="669.55" stroke="rgba(0,0,0,0.045)" stroke-width="1.5"/>
<line x1="97" y1="636.90" x2="2081.5" y2="636.90" stroke="rgba(0,0,0,0.045)" stroke-width="1.5"/>
<line x1="97" y1="604.25" x2="2081.5" y2="604.25" stroke="rgba(0,0,0,0.045)" stroke-width="1.5"/>
<line x1="97" y1="571.60" x2="2081.5" y2="571.60" stroke="rgba(0,0,0,0.045)" stroke-width="1.5"/>
<line x1="97" y1="538.95" x2="2081.5" y2="538.95" stroke="rgba(0,0,0,0.045)" stroke-width="1.5"/>
<line x1="97" y1="506.30" x2="2081.5" y2="506.30" stroke="rgba(0,0,0,0.045)" stroke-width="1.5"/>
<line x1="97" y1="473.65" x2="2081.5" y2="473.65" stroke="rgba(0,0,0,0.045)" stroke-width="1.5"/>
<line x1="97" y1="441.00" x2="2081.5" y2="441.00" stroke="rgba(0,0,0,0.045)" stroke-width="1.5"/>
<line x1="97" y1="408.35" x2="2081.5" y2="408.35" stroke="rgba(0,0,0,0.045)" stroke-width="1.5"/>
<line x1="97" y1="375.70" x2="2081.5" y2="375.70" stroke="rgba(0,0,0,0.045)" stroke-width="1.5"/>
<line x1="97" y1="343.05" x2="2081.5" y2="343.05" stroke="rgba(0,0,0,0.045)" stroke-width="1.5"/>
<line x1="97" y1="310.40" x2="2081.5" y2="310.40" stroke="rgba(0,0,0,0.045)" stroke-width="1.5"/>
<line x1="97" y1="277.75" x2="2081.5" y2="277.75" stroke="rgba(0,0,0,0.045)" stroke-width="1.5"/>
</svg>
<div class="yl" style="top:757.5px">0</div>
<div class="yl" style="top:724.9px">.2M</div>
<div class="yl" style="top:692.2px">.4M</div>
<div class="yl" style="top:659.5px">.6M</div>
<div class="yl" style="top:626.9px">.8M</div>
<div class="yl" style="top:594.2px">1M</div>
<div class="yl" style="top:561.6px">1.2M</div>
<div class="yl" style="top:529.0px">1.4M</div>
<div class="yl" style="top:496.3px">1.6M</div>
<div class="yl" style="top:463.7px">1.8M</div>
<div class="yl" style="top:431.0px">2M</div>
<div class="yl" style="top:398.4px">2.2M</div>
<div class="yl" style="top:365.7px">2.4M</div>
<div class="yl" style="top:333.1px">2.6M</div>
<div class="yl" style="top:300.4px">2.8M</div>
<div class="yl" style="top:267.8px">3M</div>
<div class="xl" style="left:189.3px;letter-spacing:-0.64px">01:15 PM</div>
<div class="xl" style="left:434.2px;letter-spacing:0.21px">01:30 PM</div>
<div class="xl" style="left:682.8px;letter-spacing:0.04px">01:45 PM</div>
<div class="xl" style="left:927.0px;letter-spacing:1.03px">02:00 PM</div>
<div class="xl" style="left:1179.0px;letter-spacing:-0.09px">02:15 PM</div>
<div class="xl" style="left:1424.2px;letter-spacing:0.80px">02:30 PM</div>
<div class="xl" style="left:1672.8px;letter-spacing:0.61px">02:45 PM</div>
<div class="xl" style="left:1919.5px;letter-spacing:0.93px">03:00 PM</div>

<!-- tab section -->
<div class="a" style="left:26px;top:900.5px;width:346.5px;height:58.5px;border:2px solid #3f6d9c;border-radius:4px;background:#fff"></div>
<svg class="a" style="left:47px;top:916.5px" width="31" height="30" viewBox="0 0 31 30"><rect x="1.2" y="1.2" width="28.6" height="27.6" rx="1" stroke="#7f8c96" stroke-width="1.6" fill="#fff"/><g><rect x="4.3" y="10.3" width="4.3" height="3.5" fill="#7d8a94"/><rect x="4.3" y="13.8" width="4.3" height="3.7" fill="#c3ccd3"/><rect x="4.3" y="17.5" width="4.3" height="4" fill="#4c5864"/><rect x="4.3" y="21.5" width="4.3" height="4.8" fill="#a9b3bb"/><rect x="10.4" y="5.5" width="4.1" height="6" fill="#7f8b95"/><rect x="10.4" y="11.5" width="4.1" height="4.5" fill="#c6cfd6"/><rect x="10.4" y="16" width="4.1" height="4.5" fill="#4c5864"/><rect x="10.4" y="20.5" width="4.1" height="5.8" fill="#b5bec5"/><rect x="14.5" y="11.5" width="2.2" height="14.8" fill="#d2d9de"/><rect x="16.7" y="11.5" width="3.6" height="3.5" fill="#8a969f"/><rect x="16.7" y="15" width="3.6" height="3.5" fill="#c3ccd3"/><rect x="16.7" y="18.5" width="3.6" height="5" fill="#4c5864"/><rect x="16.7" y="23.5" width="3.6" height="2.8" fill="#b0bac1"/><rect x="22.2" y="13.6" width="4.6" height="3.5" fill="#85919a"/><rect x="22.2" y="17.1" width="4.6" height="2.7" fill="#c3ccd3"/><rect x="22.2" y="19.8" width="4.6" height="3.3" fill="#4c5864"/><rect x="22.2" y="23.1" width="4.6" height="3.2" fill="#b5bec5"/></g></svg>
<div class="a" style="left:91px;top:918.5px;font-size:20px;line-height:24px;color:#4672a0;letter-spacing:2.6px">STACKED COLUMN</div>
<svg class="a" style="left:324px;top:924px" width="16" height="12" viewBox="0 0 16 12"><path d="M2.5 3.5 L8 9 L13.5 3.5" stroke="#3f6d9c" stroke-width="2" fill="none"/></svg>
<div class="a" style="left:383px;top:958px;width:1715px;height:1.5px;background:#dcdcdc"></div>
<div class="tab" style="left:414px;color:#333">Data</div>
<div class="a" style="left:383px;top:954.5px;width:113px;height:3.5px;background:#3f6d9c"></div>
<div class="tab" style="left:557px">Format</div>
<div class="tab" style="left:729px">Axis</div>
<div class="tab" style="left:866px">Legend</div>
<div class="tab" style="left:1041.5px;letter-spacing:0.95px">Drilldown Link</div>
<div class="tab" style="left:1288px">Description</div>

<!-- query row -->
<div class="a" style="left:26.5px;top:980px;width:2071px;height:62px;border:1.5px solid #d8d8d8;border-radius:4px;background:#fff"></div>
<svg class="a" style="left:42px;top:1003px" width="12" height="17" viewBox="0 0 12 17" fill="#8a8a8a"><rect x="0.2" y="0.3" width="3" height="3"/><rect x="8" y="0.3" width="3" height="3"/><rect x="0.2" y="6.8" width="3" height="3"/><rect x="8" y="6.8" width="3" height="3"/><rect x="0.2" y="13.4" width="3" height="3"/><rect x="8" y="13.4" width="3" height="3"/></svg>
<div class="a" style="left:78px;top:998px;font-size:21px;line-height:26px;color:#333">A</div>
<div class="a" style="left:345.5px;top:981px;width:1.5px;height:61px;background:#dcdcdc"></div>
<div class="a" style="left:362px;top:992px;width:68px;height:38px;border:1.5px solid #d6d6d6;border-radius:3px"></div>
<div class="a" style="left:375px;top:1002px;font-size:18px;line-height:22px;color:#666;letter-spacing:1.2px">WQL</div>
<svg class="a" style="left:466px;top:1000px" width="38" height="24" viewBox="0 0 38 24" fill="none" stroke="#777" stroke-width="1.8"><path d="M10 5 L3 12 L10 19 M28 5 L35 12 L28 19 M22 3 L16 21"/></svg>
<div class="a" style="left:524.5px;top:981px;width:1.5px;height:61px;background:#dcdcdc"></div>
<div class="a" style="left:547px;top:998px;font-size:21px;line-height:26px;color:#555;letter-spacing:1px">Data</div>
<div class="a" style="left:606px;top:991px;width:199px;height:39.5px;border:1.7px solid #b9475b;border-radius:8px;background:#f9e6ea"></div>
<div class="a" style="left:620px;top:998px;font-size:21px;line-height:26px;color:#444;letter-spacing:0.8px">Logs</div>
<svg class="a" style="left:768px;top:1002px" width="22" height="18" viewBox="0 0 22 18"><path d="M3 5 L11 13 L19 5" stroke="#222" stroke-width="2.4" fill="none"/></svg>
<div class="a" style="left:838px;top:998px;font-size:21px;line-height:26px;color:#555;letter-spacing:0.8px">Filters</div>
<div class="a" style="left:911px;top:991.5px;width:333px;height:39px;border:1.6px solid #3f7d5c;border-radius:8px;background:#d8f4e9"></div>
<div class="a" style="left:932px;top:999px;font-size:21px;line-height:26px;color:#333;letter-spacing:0.45px">application=wavefront</div>
<svg class="a" style="left:1167.5px;top:1003.5px" width="22" height="22" viewBox="0 0 22 22"><path d="M4 5 L17 18 M17 5 L4 18" stroke="#333" stroke-width="2" fill="none"/></svg>
<svg class="a" style="left:1203.5px;top:1003.5px" width="22" height="18" viewBox="0 0 22 18"><path d="M3 5 L11 13 L19 5" stroke="#222" stroke-width="2.4" fill="none"/></svg>
<svg class="a" style="left:1255px;top:1000px" width="26" height="26" viewBox="0 0 26 26" fill="none" stroke="#4a80c0" stroke-width="1.5"><circle cx="12.7" cy="13" r="11"/><path d="M12.7 7 L12.7 19 M6.7 13 L18.7 13" stroke-width="2"/></svg>
<div class="a" style="left:1314px;top:998px;font-size:21px;line-height:26px;color:#555;letter-spacing:1.1px">Functions</div>
<div class="a" style="left:1425px;top:991.4px;width:199px;height:39.5px;border-radius:8px;background:#6d2c9e"></div>
<svg class="a" style="left:1444px;top:1004px" width="10" height="14" viewBox="0 0 10 14" fill="#a98acc"><circle cx="2.5" cy="2.5" r="1.1"/><circle cx="7" cy="2.5" r="1.1"/><circle cx="2.5" cy="7" r="1.1"/><circle cx="7" cy="7" r="1.1"/><circle cx="2.5" cy="11.5" r="1.1"/><circle cx="7" cy="11.5" r="1.1"/></svg>
<div class="a" style="left:1510px;top:998px;font-size:21px;line-height:26px;color:#fff;letter-spacing:0.6px">count</div>
<div class="a" style="left:1810.5px;top:981px;width:1.5px;height:61px;background:#dcdcdc"></div>
<svg class="a" style="left:1834px;top:994px" width="28" height="32" viewBox="0 0 28 32" fill="none" stroke="#9a9a9a" stroke-width="1.3"><path d="M10 23 C10 18.5 5.5 16.5 5.5 11.5 C5.5 7 9 4.5 13.8 4.5 C18.5 4.5 22 7 22 11.5 C22 16.5 17.5 18.5 17.5 23 Z"/><path d="M10 25.5 L17.5 25.5 M10.5 27.5 L17 27.5 M12 21.5 L12.5 15 M15 21.5 L14 13 L12 14.5"/></svg>
<svg class="a" style="left:1886px;top:994px" width="30" height="32" viewBox="0 0 30 32" fill="none" stroke="#4a7fb8" stroke-width="1.8"><path d="M5.3 20 L5.3 5.1 L19.5 5.1" stroke="#7aa0cc"/><rect x="9" y="9" width="15.8" height="19.6" rx="1" fill="#fff"/></svg>
<svg class="a" style="left:1940px;top:994px" width="28" height="32" viewBox="0 0 28 32" fill="none" stroke="#d9614c" stroke-width="1.8"><path d="M3.4 9.5 L24.3 9.5 M10.5 9.5 L10.5 5.5 L17.5 5.5 L17.5 9.5 M5.3 9.5 L6.2 27.5 Q6.3 28.6 7.4 28.6 L20.3 28.6 Q21.4 28.6 21.5 27.5 L22.4 9.5 M10.7 14 L10.7 23.5 M16.7 14 L16.7 23.5" stroke-linecap="butt"/></svg>
<svg class="a" style="left:1992px;top:998px" width="30" height="26" viewBox="0 0 30 26" fill="none" stroke="#3f75b0" stroke-width="1.8"><path d="M3.5 12.5 C9 4.5 21 4.5 26.5 12.5 C21 20.5 9 20.5 3.5 12.5 Z"/><circle cx="15" cy="12.5" r="4.6" fill="#3f75b0" stroke="none"/></svg>
<svg class="a" style="left:2052px;top:996px" width="16" height="30" viewBox="0 0 16 30" fill="#3f6d9c"><circle cx="8" cy="6.8" r="2"/><circle cx="8" cy="16.2" r="2"/><circle cx="8" cy="26" r="2"/></svg>

<!-- group by tooltip -->
<div class="a" style="left:1372px;top:908.5px;width:331.5px;height:77.5px;background:rgba(20,20,20,0.97);border-radius:4px"></div>
<svg class="a" style="left:1527.5px;top:986px" width="20" height="10" viewBox="0 0 20 10"><path d="M0 0 L20 0 L10 10 Z" fill="#141414"/></svg>
<div class="a" style="left:1372px;top:914px;width:331px;text-align:center;font-size:19.5px;line-height:31.8px;color:#f4f4f4;font-weight:normal;-webkit-text-stroke:0.45px #f4f4f4;white-space:normal"><span id="t_gb1" style="letter-spacing:0.2px">Group By: application,</span><br><span id="t_gb2" style="letter-spacing:0.2px">tag_region</span></div>
<!-- cursor -->
<svg class="a" style="left:1566px;top:1018px" width="38" height="44" viewBox="0 0 38 44"><path d="M12.6 26 L12.6 4.6 C12.6 1.6 17.6 1.6 17.6 4.6 L17.6 13 C17.6 10.6 21.6 10.6 21.6 13 L21.6 14 C21.6 11.6 26.4 11.6 26.4 14 L26.4 16 C26.4 13.2 32 13.2 32 16 L32 30 C32 37 28.5 40.6 22 40.6 L19.5 40.6 C14.5 40.6 12 38.5 9 34.5 L3.8 27.5 C2.2 25.2 4.5 22.6 7 24.2 Z" fill="#fff" stroke="#15181c" stroke-width="2" stroke-linejoin="round"/><path d="M17.6 13 L17.6 20 M21.6 14 L21.6 20 M26.4 16 L26.4 20" stroke="#15181c" stroke-width="1.8" stroke-linecap="round"/></svg>
<!-- floating tooltip -->
<div id="tip"></div>
<svg class="a" style="left:782px;top:105px" width="10" height="15" viewBox="0 0 10 15" fill="#ddd"><rect x="1" y="1" width="2" height="2"/><rect x="6" y="1" width="2" height="2"/><rect x="1" y="6" width="2" height="2"/><rect x="6" y="6" width="2" height="2"/><rect x="1" y="11" width="2" height="2"/><rect x="6" y="11" width="2" height="2"/></svg>
<div id="t_ttl" class="a" style="left:809px;top:100px;font-size:18px;line-height:24px;color:#fff;font-weight:normal;-webkit-text-stroke:0.5px #fff;letter-spacing:0.7px">Sun Oct 23 2022 02:43:35PM</div><div id="t_tz" class="a" style="left:1075px;top:100px;font-size:18px;line-height:24px;color:#fff;font-weight:normal;-webkit-text-stroke:0.5px #fff;letter-spacing:1.9px">+0300</div>
<div id="cbar" class="a" style="left:1068.6px;top:92.8px;width:5px;height:39.4px;background:#4a74dc"></div>
<svg class="a" style="left:1245px;top:103px" width="22" height="22" viewBox="0 0 22 22"><path d="M3.5 3.5 L18.5 18.5 M18.5 3.5 L3.5 18.5" stroke="#fff" stroke-width="1.5"/></svg>
<div id="t_query" class="a" style="left:817px;top:137px;font-size:17px;line-height:24px;color:#fff;font-weight:normal;-webkit-text-stroke:0.5px #fff;letter-spacing:1px">Query</div>
<svg class="a" style="left:880px;top:140px" width="22" height="20" viewBox="0 0 22 20" fill="none" stroke="#fff" stroke-width="1.6"><path d="M6 2 L6 17 M2 13 L6 17 L10 13 M15 18 L15 3 M11 7 L15 3 L19 7"/></svg>
<div id="t_value" class="a" style="left:1167px;top:137px;font-size:17px;line-height:24px;color:#fff;font-weight:normal;-webkit-text-stroke:0.5px #fff;letter-spacing:1px">Value</div>
<svg class="a" style="left:1224px;top:140px" width="20" height="20" viewBox="0 0 20 20" fill="none" stroke="#ccc" stroke-width="1.6"><path d="M10 2 L10 18 M4 12 L10 18 L16 12"/></svg>
<div class="a" style="left:778px;top:168.5px;width:294px;height:1.5px;background:#7d848b"></div>
<div class="a" style="left:818px;top:166.5px;width:253px;height:3.5px;background:#6f767d"></div>
<div class="a" style="left:1120px;top:132px;width:26px;height:338px;background:linear-gradient(to right,rgba(0,0,0,0),rgba(0,0,0,0.12))"></div>
<div class="a" style="left:1145.5px;top:132px;width:1.5px;height:338px;background:#2a3239"></div>
<div class="sw" style="top:177.1px;background:#58667a"></div>
<div class="wf" style="top:175.8px">wavefront,</div>
<div class="val" style="top:175.1px">9.053 k</div>
<div class="strip" style="top:169.1px;background:#58667a"></div>
<div class="sw" style="top:210.3px;background:#3b6650"></div>
<div class="wf" style="top:209.0px">wavefront,</div>
<div class="val" style="top:208.3px">84.488 k</div>
<div class="strip" style="top:202.2px;background:#3b6650"></div>
<div class="sw" style="top:243.5px;background:#a07537"></div>
<div class="wf" style="top:242.2px">wavefront,</div>
<div class="val" style="top:241.5px">1.150 M</div>
<div class="strip" style="top:235.3px;background:#a07537"></div>
<div class="sw" style="top:276.7px;background:#8e979e"></div>
<div class="wf" style="top:275.4px">wavefront,</div>
<div class="val" style="top:274.7px">20.384 k</div>
<div class="strip" style="top:268.4px;background:#8e979e"></div>
<div class="sw" style="top:309.9px;background:#5b8a3c"></div>
<div class="wf" style="top:308.6px">wavefront,</div>
<div class="val" style="top:307.9px">5.845 k</div>
<div class="strip" style="top:301.5px;background:#5b8a3c"></div>
<div class="sw" style="top:343.1px;background:#eeb04f"></div>
<div class="wf" style="top:341.8px">wavefront,</div>
<div class="val" style="top:341.1px">6.212 k</div>
<div class="strip" style="top:334.6px;background:#eeb04f"></div>
<div class="sw" style="top:376.3px;background:#2c4e8c"></div>
<div class="wf" style="top:375.0px">wavefront,</div>
<div class="val" style="top:374.3px">7.303 k</div>
<div class="strip" style="top:367.7px;background:#2c4e8c"></div>
<div class="sw" style="top:409.5px;background:#a062c9"></div>
<div class="wf" style="top:408.2px">wavefront,</div>
<div class="val" style="top:407.5px">4.957 k</div>
<div class="strip" style="top:400.8px;background:#a062c9"></div>
<div class="sw" style="top:442.7px;background:#4c80e4"></div>
<div class="wf" style="top:441.4px">wavefront,</div>
<div class="val" style="top:440.7px">5.777 k</div>
<div class="strip" style="top:433.9px;background:#4c80e4"></div>
<div class="a" style="left:914px;top:174.3px;width:178px;height:293.3px;background:#dfdde2"></div>
<style>
#t_live{left:72.00px !important;letter-spacing:1.267px !important}
#t_2h{left:176.20px !important;letter-spacing:2.800px !important}
#t_last{left:235.60px !important;letter-spacing:1.131px !important}
#t_off{left:1363.40px !important;letter-spacing:1.100px !important}
#t_bd{left:1612.80px !important;letter-spacing:1.071px !important}
#t_on{left:2018.20px !important;letter-spacing:2.100px !important}
#t_save{left:2021.50px !important;letter-spacing:1.100px !important}
#t_card{left:57.20px !important;letter-spacing:0.202px !important}
#t_ttl{left:809.00px !important;letter-spacing:0.916px !important}
#t_tz{left:1075.80px !important;letter-spacing:2.000px !important}
#t_query{left:818.00px !important;letter-spacing:1.600px !important}
#t_value{left:1167.80px !important;letter-spacing:1.650px !important}
.wf{left:818.60px !important;letter-spacing:1.605px !important}
#t_gb1{letter-spacing:0.934px !important}
#t_gb2{letter-spacing:1.244px !important}
</style>
</body></html>
